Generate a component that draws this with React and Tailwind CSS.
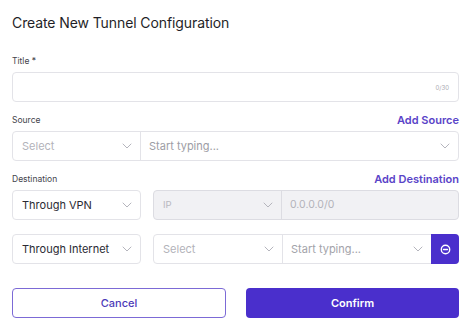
import React from "react";

const Chevron = ({ className = "" }) => (
  <svg width="10" height="6" viewBox="0 0 10 6" className={className} fill="none">
    <path d="M1 1l4 4 4-4" stroke="#b5b5bd" strokeWidth="1" strokeLinecap="round" strokeLinejoin="round" />
  </svg>
);

const MinusCircle = () => (
  <svg width="11" height="11" viewBox="0 0 12 12" fill="none">
    <circle cx="6" cy="6" r="4.6" stroke="white" strokeWidth="1.5" />
    <path d="M3.8 6h4.4" stroke="white" strokeWidth="1.5" strokeLinecap="round" />
  </svg>
);

export default function App() {
  return (
    <div
      className="w-[474px] h-[328px] bg-white px-3 text-[#2a2a33] overflow-hidden"
      style={{ fontFamily: "Inter, 'Noto Sans', sans-serif" }}
    >
      <div className="w-[447px]">
        <h1 className="pt-[12px] h-[34px] text-[14px] leading-[21px] font-normal text-[#1f1f27] tracking-[-0.1px]">
          Create New Tunnel Configuration
        </h1>
        <div className="mt-[21px] text-[8.5px] leading-[12px] text-[#44444c]">Title *</div>
        <div className="mt-[5px] h-[30px] border border-[#e3e3e8] rounded-[4px] flex items-center justify-end pr-[9px]">
          <span className="text-[6px] text-[#a9a9b0]">0/30</span>
        </div>

        <div className="mt-[11px] flex items-center justify-between h-[14px]">
          <span className="text-[8.5px] leading-[12px] text-[#44444c]">Source</span>
          <span className="text-[11px] leading-[14px] font-semibold text-[#5a44c8]">Add Source</span>
        </div>
        <div className="mt-[4px] h-[30px] flex border border-[#e3e3e8] rounded-[4px]">
          <div className="w-[128px] flex items-center justify-between pl-[9px] pr-[8px] border-r border-[#e3e3e8]">
            <span className="text-[11px] text-[#b3b3ba]">Select</span>
            <Chevron />
          </div>
          <div className="flex-1 flex items-center justify-between pl-[8px] pr-[8px]">
            <span className="text-[11px] text-[#9d9da5]">Start typing...</span>
            <Chevron />
          </div>
        </div>

        <div className="mt-[11px] flex items-center justify-between h-[14px]">
          <span className="text-[8.5px] leading-[12px] text-[#44444c]">Destination</span>
          <span className="text-[11px] leading-[14px] font-semibold text-[#5a44c8]">Add Destination</span>
        </div>
        <div className="mt-[4px] h-[30px] flex gap-[12px]">
          <div className="w-[129px] flex items-center justify-between pl-[9px] pr-[8px] border border-[#e3e3e8] rounded-[4px]">
            <span className="text-[11px] text-[#2a2a33]">Through VPN</span>
            <Chevron />
          </div>
          <div className="flex-1 flex border border-[#dcdce2] rounded-[4px] bg-[#f1f1f4]">
            <div className="w-[128px] flex items-center justify-between pl-[9px] pr-[8px] border-r border-[#dcdce2]">
              <span className="text-[9.5px] text-[#b8b8bf]">IP</span>
              <Chevron />
            </div>
            <div className="flex-1 flex items-center pl-[8px]">
              <span className="text-[10.5px] text-[#b3b3ba]">0.0.0.0/0</span>
            </div>
          </div>
        </div>

        <div className="mt-[14px] h-[30px] flex gap-[12px]">
          <div className="w-[129px] flex items-center justify-between pl-[9px] pr-[8px] border border-[#e3e3e8] rounded-[4px]">
            <span className="text-[11px] text-[#2a2a33]">Through Internet</span>
            <Chevron />
          </div>
          <div className="flex-1 flex border border-[#e3e3e8] rounded-[4px]">
            <div className="w-[129px] flex items-center justify-between pl-[9px] pr-[8px] border-r border-[#e3e3e8]">
              <span className="text-[11px] text-[#b3b3ba]">Select</span>
              <Chevron />
            </div>
            <div className="flex-1 flex items-center justify-between pl-[8px] pr-[8px]">
              <span className="text-[11px] text-[#a3a3aa]">Start typing...</span>
              <Chevron />
            </div>
            <div className="w-[28px] -my-px -mr-px bg-[#4a2fcc] rounded-r-[4px] flex items-center justify-center">
              <MinusCircle />
            </div>
          </div>
        </div>

        <div className="mt-[24px] flex gap-[20px]">
          <button className="w-[214px] h-[30px] border border-[#7c6ad6] rounded-[4px] text-[11px] font-medium text-[#4d3bb8] bg-white">
            Cancel
          </button>
          <button className="flex-1 h-[30px] rounded-[4px] text-[11px] font-semibold text-white bg-[#4a2fcc]">
            Confirm
          </button>
        </div>
      </div>
    </div>
  );
}
